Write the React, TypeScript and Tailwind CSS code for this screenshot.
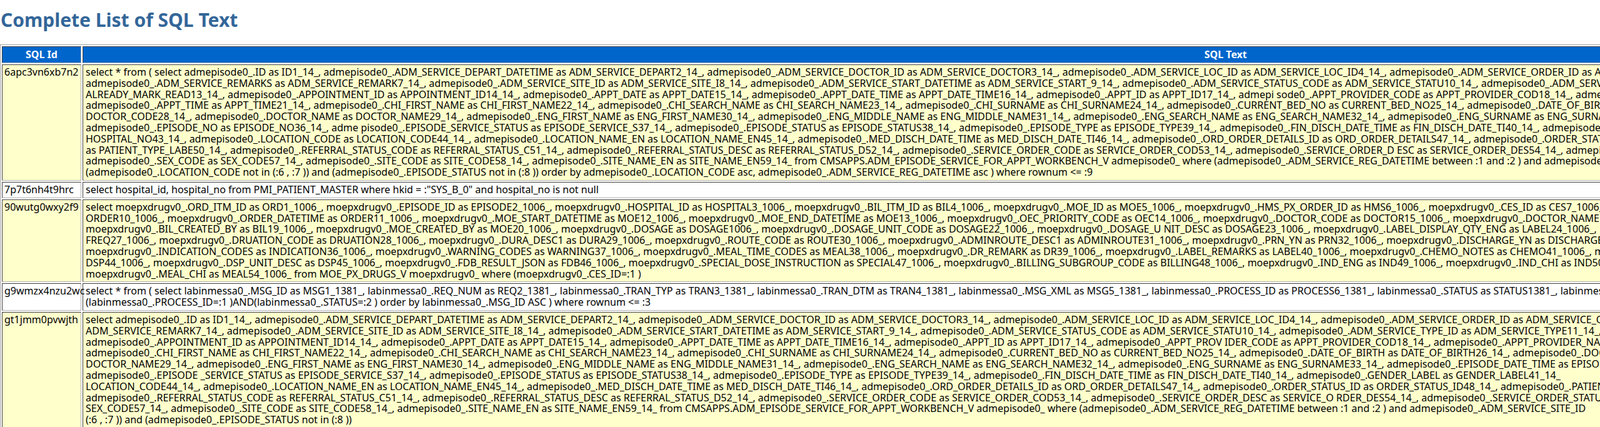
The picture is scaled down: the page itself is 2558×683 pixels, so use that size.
const rows: { id: string; lines: string[]; yellow: boolean }[] = [
  {
    id: "6apc3vn6xb7n2",
    yellow: true,
    lines: [
      "select * from ( select admepisode0_.ID as ID1_14_, admepisode0_.ADM_SERVICE_DEPART_DATETIME as ADM_SERVICE_DEPART2_14_, admepisode0_.ADM_SERVICE_DOCTOR_ID as ADM_SERVICE_DOCTOR3_14_, admepisode0_.ADM_SERVICE_LOC_ID as ADM_SERVICE_LOC_ID4_14_, admepisode0_.ADM_SERVICE_ORDER_ID as ADM_SERVICE_ORDER5_14_,",
      "admepisode0_.ADM_SERVICE_REMARKS as ADM_SERVICE_REMARK7_14_, admepisode0_.ADM_SERVICE_SITE_ID as ADM_SERVICE_SITE_I8_14_, admepisode0_.ADM_SERVICE_START_DATETIME as ADM_SERVICE_START_9_14_, admepisode0_.ADM_SERVICE_STATUS_CODE as ADM_SERVICE_STATU10_14_, admepisode0_.ADM_SERVICE_TYPE_ID as ADM_SERVICE_TYPE11_14_,",
      "ALREADY_MARK_READ13_14_, admepisode0_.APPOINTMENT_ID as APPOINTMENT_ID14_14_, admepisode0_.APPT_DATE as APPT_DATE15_14_, admepisode0_.APPT_DATE_TIME as APPT_DATE_TIME16_14_, admepisode0_.APPT_ID as APPT_ID17_14_, admepi sode0_.APPT_PROVIDER_CODE as APPT_PROVIDER_COD18_14_, admepisode0_.APPT_PROVIDER_NAME",
      "admepisode0_.APPT_TIME as APPT_TIME21_14_, admepisode0_.CHI_FIRST_NAME as CHI_FIRST_NAME22_14_, admepisode0_.CHI_SEARCH_NAME as CHI_SEARCH_NAME23_14_, admepisode0_.CHI_SURNAME as CHI_SURNAME24_14_, admepisode0_.CURRENT_BED_NO as CURRENT_BED_NO25_14_, admepisode0_.DATE_OF_BIRTH",
      "DOCTOR_CODE28_14_, admepisode0_.DOCTOR_NAME as DOCTOR_NAME29_14_, admepisode0_.ENG_FIRST_NAME as ENG_FIRST_NAME30_14_, admepisode0_.ENG_MIDDLE_NAME as ENG_MIDDLE_NAME31_14_, admepisode0_.ENG_SEARCH_NAME as ENG_SEARCH_NAME32_14_, admepisode0_.ENG_SURNAME as ENG_SURNAME33_14_",
      "admepisode0_.EPISODE_NO as EPISODE_NO36_14_, adme pisode0_.EPISODE_SERVICE_STATUS as EPISODE_SERVICE_S37_14_, admepisode0_.EPISODE_STATUS as EPISODE_STATUS38_14_, admepisode0_.EPISODE_TYPE as EPISODE_TYPE39_14_, admepisode0_.FIN_DISCH_DATE_TIME as FIN_DISCH_DATE_TI40_14_, admepisode0_.GENDER",
      "HOSPITAL_NO43_14_, admepisode0_.LOCATION_CODE as LOCATION_CODE44_14_, admepisode0_.LOCATION_NAME_EN as LOCATION_NAME_EN45_14_, admepisode0_.MED_DISCH_DATE_TIME as MED_DISCH_DATE_TI46_14_, admepisode0_.ORD_ORDER_DETAILS_ID as ORD_ORDER_DETAILS47_14_, admepisode0_.ORDER_STATUS",
      "as PATIENT_TYPE_LABE50_14_, admepisode0_.REFERRAL_STATUS_CODE as REFERRAL_STATUS_C51_14_, admepisode0_.REFERRAL_STATUS_DESC as REFERRAL_STATUS_D52_14_, admepisode0_.SERVICE_ORDER_CODE as SERVICE_ORDER_COD53_14_, admepisode0_.SERVICE_ORDER_D ESC as SERVICE_ORDER_DES54_14_, admepisode0_.SEX",
      "admepisode0_.SEX_CODE as SEX_CODE57_14_, admepisode0_.SITE_CODE as SITE_CODE58_14_, admepisode0_.SITE_NAME_EN as SITE_NAME_EN59_14_ from CMSAPPS.ADM_EPISODE_SERVICE_FOR_APPT_WORKBENCH_V admepisode0_ where (admepisode0_.ADM_SERVICE_REG_DATETIME between :1 and :2 ) and admepisode0_.ADM_SERVICE",
      "(admepisode0_.LOCATION_CODE not in (:6 , :7 )) and (admepisode0_.EPISODE_STATUS not in (:8 )) order by admepisode0_.LOCATION_CODE asc, admepisode0_.ADM_SERVICE_REG_DATETIME asc ) where rownum <= :9",
    ],
  },
  {
    id: "7p7t6nh4t9hrc",
    yellow: false,
    lines: ['select hospital_id, hospital_no from PMI_PATIENT_MASTER where hkid = :"SYS_B_0" and hospital_no is not null'],
  },
  {
    id: "90wutg0wxy2f9",
    yellow: true,
    lines: [
      "select moepxdrugv0_.ORD_ITM_ID as ORD1_1006_, moepxdrugv0_.EPISODE_ID as EPISODE2_1006_, moepxdrugv0_.HOSPITAL_ID as HOSPITAL3_1006_, moepxdrugv0_.BIL_ITM_ID as BIL4_1006_, moepxdrugv0_.MOE_ID as MOE5_1006_, moepxdrugv0_.HMS_PX_ORDER_ID as HMS6_1006_, moepxdrugv0_.CES_ID as CES7_1006_, moepxdrugv0_.ORDER",
      "ORDER10_1006_, moepxdrugv0_.ORDER_DATETIME as ORDER11_1006_, moepxdrugv0_.MOE_START_DATETIME as MOE12_1006_, moepxdrugv0_.MOE_END_DATETIME as MOE13_1006_, moepxdrugv0_.OEC_PRIORITY_CODE as OEC14_1006_, moepxdrugv0_.DOCTOR_CODE as DOCTOR15_1006_, moepxdrugv0_.DOCTOR_NAME as DOCTOR16_1006_",
      "moepxdrugv0_.BIL_CREATED_BY as BIL19_1006_, moepxdrugv0_.MOE_CREATED_BY as MOE20_1006_, moepxdrugv0_.DOSAGE as DOSAGE1006_, moepxdrugv0_.DOSAGE_UNIT_CODE as DOSAGE22_1006_, moepxdrugv0_.DOSAGE_U NIT_DESC as DOSAGE23_1006_, moepxdrugv0_.LABEL_DISPLAY_QTY_ENG as LABEL24_1006_, moepx",
      "FREQ27_1006_, moepxdrugv0_.DRUATION_CODE as DRUATION28_1006_, moepxdrugv0_.DURA_DESC1 as DURA29_1006_, moepxdrugv0_.ROUTE_CODE as ROUTE30_1006_, moepxdrugv0_.ADMINROUTE_DESC1 as ADMINROUTE31_1006_, moepxdrugv0_.PRN_YN as PRN32_1006_, moepxdrugv0_.DISCHARGE_YN as DISCHARGE33_1006_",
      "moepxdrugv0_.INDICATION_CODES as INDICATION36_1006_, moepxdrugv0_.WARNING_CODES as WARNING37_1006_, moepxdrugv0_.MEAL_TIME_CODES as MEAL38_1006_, moepxdrugv0_.DR_REMARK as DR39_1006_, moepxdrugv0_.LABEL_REMARKS as LABEL40_1006_, moepxdrugv0_.CHEMO_NOTES as CHEMO41_1006_, moepxdrugv0_.",
      "DSP44_1006_, moepxdrugv0_.DSP_UNIT_DESC as DSP45_1006_, moepxdrugv0_.FDB_RESULT_JSON as FDB46_1006_, moepxdrugv0_.SPECIAL_DOSE_INSTRUCTION as SPECIAL47_1006_, moepxdrugv0_.BILLING_SUBGROUP_CODE as BILLING48_1006_, moepxdrugv0_.IND_ENG as IND49_1006_, moepxdrugv0_.IND_CHI as IND50_1006_",
      "moepxdrugv0_.MEAL_CHI as MEAL54_1006_ from MOE_PX_DRUGS_V moepxdrugv0_ where (moepxdrugv0_.CES_ID=:1 )",
    ],
  },
  {
    id: "g9wmzx4nzu2wc",
    yellow: false,
    lines: [
      "select * from ( select labinmessa0_.MSG_ID as MSG1_1381_, labinmessa0_.REQ_NUM as REQ2_1381_, labinmessa0_.TRAN_TYP as TRAN3_1381_, labinmessa0_.TRAN_DTM as TRAN4_1381_, labinmessa0_.MSG_XML as MSG5_1381_, labinmessa0_.PROCESS_ID as PROCESS6_1381_, labinmessa0_.STATUS as STATUS1381_, labinmessa0_.CREATE",
      "(labinmessa0_.PROCESS_ID=:1 )AND(labinmessa0_.STATUS=:2 ) order by labinmessa0_.MSG_ID ASC ) where rownum <= :3",
    ],
  },
  {
    id: "gt1jmm0pvwjth",
    yellow: true,
    lines: [
      "select admepisode0_.ID as ID1_14_, admepisode0_.ADM_SERVICE_DEPART_DATETIME as ADM_SERVICE_DEPART2_14_, admepisode0_.ADM_SERVICE_DOCTOR_ID as ADM_SERVICE_DOCTOR3_14_, admepisode0_.ADM_SERVICE_LOC_ID as ADM_SERVICE_LOC_ID4_14_, admepisode0_.ADM_SERVICE_ORDER_ID as ADM_SERVICE_ORDER5_14_, adm",
      "ADM_SERVICE_REMARK7_14_, admepisode0_.ADM_SERVICE_SITE_ID as ADM_SERVICE_SITE_I8_14_, admepisode0_.ADM_SERVICE_START_DATETIME as ADM_SERVICE_START_9_14_, admepisode0_.ADM_SERVICE_STATUS_CODE as ADM_SERVICE_STATU10_14_, admepisode0_.ADM_SERVICE_TYPE_ID as ADM_SERVICE_TYPE11_14_, ad",
      "admepisode0_.APPOINTMENT_ID as APPOINTMENT_ID14_14_, admepisode0_.APPT_DATE as APPT_DATE15_14_, admepisode0_.APPT_DATE_TIME as APPT_DATE_TIME16_14_, admepisode0_.APPT_ID as APPT_ID17_14_, admepisode0_.APPT_PROV IDER_CODE as APPT_PROVIDER_COD18_14_, admepisode0_.APPT_PROVIDER_NAME as A",
      "admepisode0_.CHI_FIRST_NAME as CHI_FIRST_NAME22_14_, admepisode0_.CHI_SEARCH_NAME as CHI_SEARCH_NAME23_14_, admepisode0_.CHI_SURNAME as CHI_SURNAME24_14_, admepisode0_.CURRENT_BED_NO as CURRENT_BED_NO25_14_, admepisode0_.DATE_OF_BIRTH as DATE_OF_BIRTH26_14_, admepisode0_.DOCTOR_CODE",
      "DOCTOR_NAME29_14_, admepisode0_.ENG_FIRST_NAME as ENG_FIRST_NAME30_14_, admepisode0_.ENG_MIDDLE_NAME as ENG_MIDDLE_NAME31_14_, admepisode0_.ENG_SEARCH_NAME as ENG_SEARCH_NAME32_14_, admepisode0_.ENG_SURNAME as ENG_SURNAME33_14_, admepisode0_.EPISODE_DATE_TIME as EPISODE_DATE",
      "admepisode0_.EPISODE _SERVICE_STATUS as EPISODE_SERVICE_S37_14_, admepisode0_.EPISODE_STATUS as EPISODE_STATUS38_14_, admepisode0_.EPISODE_TYPE as EPISODE_TYPE39_14_, admepisode0_.FIN_DISCH_DATE_TIME as FIN_DISCH_DATE_TI40_14_, admepisode0_.GENDER_LABEL as GENDER_LABEL41_14_",
      "LOCATION_CODE44_14_, admepisode0_.LOCATION_NAME_EN as LOCATION_NAME_EN45_14_, admepisode0_.MED_DISCH_DATE_TIME as MED_DISCH_DATE_TI46_14_, admepisode0_.ORD_ORDER_DETAILS_ID as ORD_ORDER_DETAILS47_14_, admepisode0_.ORDER_STATUS_ID as ORDER_STATUS_ID48_14_, admepisode0_.PATIENT",
      "admepisode0_.REFERRAL_STATUS_CODE as REFERRAL_STATUS_C51_14_, admepisode0_.REFERRAL_STATUS_DESC as REFERRAL_STATUS_D52_14_, admepisode0_.SERVICE_ORDER_CODE as SERVICE_ORDER_COD53_14_, admepisode0_.SERVICE_ORDER_DESC as SERVICE_O RDER_DES54_14_, admepisode0_.SERVICE_ORDER_STATUS",
      "SEX_CODE57_14_, admepisode0_.SITE_CODE as SITE_CODE58_14_, admepisode0_.SITE_NAME_EN as SITE_NAME_EN59_14_ from CMSAPPS.ADM_EPISODE_SERVICE_FOR_APPT_WORKBENCH_V admepisode0_ where (admepisode0_.ADM_SERVICE_REG_DATETIME between :1 and :2 ) and admepisode0_.ADM_SERVICE_SITE_ID",
      "(:6 , :7 )) and (admepisode0_.EPISODE_STATUS not in (:8 ))",
    ],
  },
];

const cellBorder =
  "border border-t-[#404040] border-l-[#404040] border-b-[#b0b0b0] border-r-[#b0b0b0]";

export default function App() {
  return (
    <div className="w-[2558px] h-[683px] overflow-hidden bg-white text-black font-['Liberation_Sans']">
      <h2 className="pt-[14px] pl-[1px] text-[30px] leading-[36px] font-bold text-[#336699] font-['Liberation_Sans']">
        Complete List of SQL Text
      </h2>
      <table className="mt-[21px] border-separate border-spacing-[2px] border border-t-[#a0a0a0] border-l-[#a0a0a0] border-b-[#404040] border-r-[#404040] w-[3790px] table-fixed font-['Liberation_Sans']">
        <thead>
          <tr>
            <th className={`${cellBorder} w-[127px] bg-[#0066CC] text-white font-bold text-[16px] leading-[18px] px-1 pt-[3px] pb-[4px]`}>
              SQL Id
            </th>
            <th className={`${cellBorder} bg-[#0066CC] text-white font-bold text-[16px] leading-[18px] px-1 pt-[3px] pb-[4px]`}>
              SQL Text
            </th>
          </tr>
        </thead>
        <tbody>
          {rows.map((r) => (
            <tr key={r.id}>
              <td
                className={`${cellBorder} align-top text-[16px] leading-[17.8px] px-[3px] py-[3px] whitespace-nowrap ${
                  r.yellow ? "bg-[#FFFFCC]" : "bg-white"
                }`}
              >
                {r.id}
              </td>
              <td
                className={`${cellBorder} align-top text-[16px] leading-[17.8px] px-[4px] py-[3px] whitespace-nowrap overflow-hidden ${
                  r.yellow ? "bg-[#FFFFCC]" : "bg-white"
                }`}
              >
                {r.lines.map((l, i) => (
                  <div key={i}>{l}</div>
                ))}
              </td>
            </tr>
          ))}
        </tbody>
      </table>
    </div>
  );
}
